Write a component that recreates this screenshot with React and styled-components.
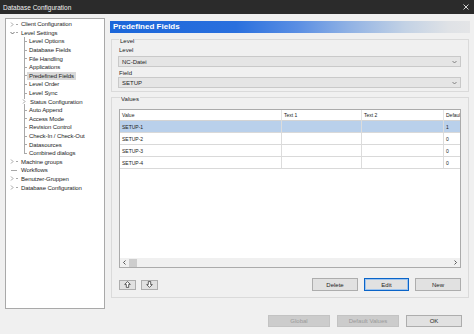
import React from 'react';
import styled, { createGlobalStyle, css } from 'styled-components';

const GlobalStyle = createGlobalStyle`
  html, body { margin: 0; padding: 0; }
  body {
    background: #f0f0f0;
    font-family: "Liberation Sans", Arial, sans-serif;
    color: #1a1a1a;
  }
  * { box-sizing: border-box; }
`;

const Window = styled.div`
  width: 474px;
  height: 334px;
  display: flex;
  flex-direction: column;
  background: #f0f0f0;
  overflow: hidden;
`;

const TitleBar = styled.div`
  height: 14px;
  flex: none;
  background: #2b2b2b;
  color: #f2f2f2;
  display: flex;
  align-items: center;
  justify-content: space-between;
  padding: 0 5px 0 3px;
  font-size: 6.5px;
`;

const Body = styled.div`
  flex: 1;
  min-width: 0;
  display: flex;
  flex-direction: column;
  padding: 4px 4px 0 5px;
`;

const Main = styled.div`
  display: flex;
  gap: 4px;
  height: 291px;
  min-width: 0;
`;

/* ---------- Tree ---------- */
const TreePanel = styled.div`
  width: 100px;
  height: 100%;
  flex: none;
  background: #fff;
  border: 1px solid #a9a9a9;
  padding-top: 1px;
  font-size: 6px;
  letter-spacing: -0.1px;
`;

const TreeRow = styled.div`
  height: 8.6px;
  display: flex;
  align-items: stretch;
  white-space: nowrap;
  padding-left: ${(p) => (p.$depth ? 18 : 4)}px;
`;

const RootSlot = styled.span`
  width: 9px;
  flex: none;
  display: flex;
  align-items: center;
  background: linear-gradient(#a8a8a8, #a8a8a8) no-repeat;
  background-size: ${(p) => (p.$leaf ? '6px 1px' : '2px 1px')};
  background-position: ${(p) => (p.$leaf ? '1px 50%' : '6px 50%')};
`;

const Connector = styled.span`
  width: ${(p) => (p.$expander ? 4 : 3)}px;
  flex: none;
  display: flex;
  align-items: center;
  background:
    linear-gradient(#a8a8a8, #a8a8a8) left top / 1px ${(p) => (p.$last ? '50%' : '100%')} no-repeat,
    linear-gradient(#a8a8a8, #a8a8a8) left center / ${(p) => (p.$expander ? '0px' : '100%')} 1px no-repeat;
`;

const ChevronBox = styled.span`
  display: flex;
  align-items: center;
  margin-left: ${(p) => p.$shift || 0}px;
  background: ${(p) => (p.$white ? '#fff' : 'transparent')};
`;

const TreeLabel = styled.span`
  display: flex;
  align-items: center;
  padding: 0 2px;
  color: #1e1e1e;
  ${(p) =>
    p.$selected &&
    css`
      background: #d9d9d9;
    `}
`;

const ChevronRight = ({ color = '#8c8c8c' }) => (
  <svg width="4" height="5" viewBox="0 0 4 5">
    <path d="M1 0.5 L3 2.5 L1 4.5" stroke={color} strokeWidth="0.8" fill="none" />
  </svg>
);

const ChevronDown = () => (
  <svg width="5" height="4" viewBox="0 0 5 4">
    <path d="M0.5 1 L2.5 3 L4.5 1" stroke="#505050" strokeWidth="0.8" fill="none" />
  </svg>
);

const treeData = [
  { label: 'Client Configuration', depth: 0, exp: 'closed' },
  { label: 'Level Settings', depth: 0, exp: 'open' },
  { label: 'Level Options', depth: 1 },
  { label: 'Database Fields', depth: 1 },
  { label: 'File Handling', depth: 1 },
  { label: 'Applications', depth: 1 },
  { label: 'Predefined Fields', depth: 1, selected: true },
  { label: 'Level Order', depth: 1 },
  { label: 'Level Sync', depth: 1 },
  { label: 'Status Configuration', depth: 1, exp: 'closed' },
  { label: 'Auto Append', depth: 1 },
  { label: 'Access Mode', depth: 1 },
  { label: 'Revision Control', depth: 1 },
  { label: 'Check-In / Check-Out', depth: 1 },
  { label: 'Datasources', depth: 1 },
  { label: 'Combined dialogs', depth: 1, last: true },
  { label: 'Machine groups', depth: 0, exp: 'closed' },
  { label: 'Workflows', depth: 0 },
  { label: 'Benutzer-Gruppen', depth: 0, exp: 'closed' },
  { label: 'Database Configuration', depth: 0, exp: 'closed' },
];

const TreeItem = ({ item }) => {
  if (item.depth === 0) {
    return (
      <TreeRow $depth={0}>
        <RootSlot $leaf={!item.exp}>
          {item.exp === 'closed' && <ChevronRight />}
          {item.exp === 'open' && <ChevronDown />}
        </RootSlot>
        <TreeLabel $selected={item.selected}>{item.label}</TreeLabel>
      </TreeRow>
    );
  }
  return (
    <TreeRow $depth={1}>
      <Connector $last={item.last} $expander={!!item.exp}>
        {item.exp && (
          <ChevronBox $shift={-2} $white>
            <ChevronRight />
          </ChevronBox>
        )}
      </Connector>
      <TreeLabel $selected={item.selected}>{item.label}</TreeLabel>
    </TreeRow>
  );
};

/* ---------- Right pane ---------- */
const RightPane = styled.div`
  flex: 1;
  min-width: 0;
  display: flex;
  flex-direction: column;
  padding-top: 3px;
`;

const Banner = styled.div`
  height: 12px;
  margin-left: 1px;
  padding-left: 3px;
  background: linear-gradient(
    to right,
    #1b66d9 0%,
    #2a70de 35%,
    #5a8ee3 52%,
    #8fb1e4 66%,
    #c3d2e5 82%,
    #dfe2e6 94%,
    #e4e5e7 100%
  );
  color: #fff;
  font-weight: bold;
  font-size: 8px;
  line-height: 12px;
`;

const Group = styled.fieldset`
  margin: ${(p) => p.$top}px 1px 0 2px;
  padding: 0 7px ${(p) => p.$bottom}px ${(p) => p.$left}px;
  border: 1px solid #dadada;
  min-width: 0;
`;

const Legend = styled.legend`
  font-size: 6px;
  line-height: 6px;
  padding: 3px 1px 0 1px;
  margin-left: 1px;
  color: #1e1e1e;
`;

const FieldLabel = styled.div`
  font-size: 6px;
  line-height: 7px;
  margin-top: 3px;
  padding-left: 1px;
  color: #1e1e1e;
`;

const Combo = styled.div`
  height: 11px;
  margin-top: ${(p) => p.$top}px;
  background: #e5e5e5;
  border: 1px solid #c9c9c9;
  display: flex;
  align-items: center;
  justify-content: space-between;
  padding: 0 3px 0 3px;
  font-size: 6px;
  color: #1e1e1e;
`;

const ComboArrow = () => (
  <svg width="5" height="4" viewBox="0 0 5 4">
    <path d="M0.5 1 L2.5 3 L4.5 1" stroke="#6a6a6a" strokeWidth="0.8" fill="none" />
  </svg>
);

/* ---------- Table ---------- */
const TableFrame = styled.div`
  height: 159px;
  margin-top: 7px;
  border: 1px solid #ababab;
  background: #fff;
  display: flex;
  flex-direction: column;
  overflow: hidden;
  min-width: 0;
`;

const Grid = styled.div`
  flex: 1;
  min-width: 0;
  display: grid;
  grid-template-columns: 162px 80px 82px 40px;
  grid-template-rows: 11px;
  grid-auto-rows: 12px;
  align-content: start;
  overflow: hidden;
  font-size: 5px;
`;

const Cell = styled.div`
  display: flex;
  align-items: center;
  padding-left: 2px;
  white-space: nowrap;
  overflow: hidden;
  color: #222;
  border-right: 1px solid ${(p) => (p.$head ? '#e4e4e4' : '#dcdcdc')};
  border-bottom: 1px solid ${(p) => (p.$head ? '#d3d3d3' : '#d9d9d9')};
  background: ${(p) => (p.$selected ? '#b9d0eb' : '#fff')};
`;

const ScrollBar = styled.div`
  height: 9px;
  flex: none;
  background: #f0f0f0;
  display: flex;
  align-items: center;
`;

const ScrollArrow = styled.span`
  width: 9px;
  height: 100%;
  display: flex;
  align-items: center;
  justify-content: center;
`;

const ScrollThumb = styled.span`
  width: 8px;
  height: 8px;
  background: #cdcdcd;
`;

const ScrollSpacer = styled.span`
  flex: 1;
`;

/* ---------- Buttons ---------- */
const ButtonRow = styled.div`
  display: flex;
  align-items: center;
  margin-top: 10px;
  gap: 5px;
`;

const Spacer = styled.div`
  flex: 1;
`;

const ActionGroup = styled.div`
  display: flex;
  gap: 6px;
`;

const IconButton = styled.button`
  width: 17px;
  height: 10px;
  padding: 0;
  border: 1px solid #adadad;
  background: #e1e1e1;
  display: flex;
  align-items: center;
  justify-content: center;
`;

const Button = styled.button`
  width: ${(p) => p.$w}px;
  height: ${(p) => p.$h}px;
  padding: 0;
  font-family: "Liberation Sans", Arial, sans-serif;
  font-size: 6px;
  color: #1e1e1e;
  background: #e1e1e1;
  border: 1px solid #adadad;
  ${(p) =>
    p.$focused &&
    css`
      border-color: #0a64c8;
      box-shadow: inset 0 0 0 1px #9cc3ee;
    `}
  ${(p) =>
    p.disabled &&
    css`
      background: #cccccc;
      border-color: #c3c3c3;
      color: #9a9a9a;
    `}
`;

const Footer = styled.div`
  display: flex;
  justify-content: flex-end;
  gap: 7px;
  margin-top: 6px;
  padding-right: 8px;
`;

const UpArrow = () => (
  <svg width="7" height="7" viewBox="0 0 7 7">
    <path d="M3.5 0.6 L6.3 3.4 H4.7 V6.4 H2.3 V3.4 H0.7 Z" stroke="#222" strokeWidth="0.7" fill="#fff" />
  </svg>
);

const DownArrow = () => (
  <svg width="7" height="7" viewBox="0 0 7 7">
    <path d="M3.5 6.4 L6.3 3.6 H4.7 V0.6 H2.3 V3.6 H0.7 Z" stroke="#222" strokeWidth="0.7" fill="#fff" />
  </svg>
);

const CloseIcon = () => (
  <svg width="6" height="6" viewBox="0 0 6 6">
    <path d="M0.5 0.5 L5.5 5.5 M5.5 0.5 L0.5 5.5" stroke="#e8e8e8" strokeWidth="0.9" />
  </svg>
);

const rows = [
  { value: 'SETUP-1', def: '1', selected: true },
  { value: 'SETUP-2', def: '0' },
  { value: 'SETUP-3', def: '0' },
  { value: 'SETUP-4', def: '0' },
];

export default function App() {
  return (
    <>
      <GlobalStyle />
      <Window>
        <TitleBar>
          <span>Database Configuration</span>
          <CloseIcon />
        </TitleBar>
        <Body>
          <Main>
            <TreePanel>
              {treeData.map((item) => (
                <TreeItem key={item.label} item={item} />
              ))}
            </TreePanel>
            <RightPane>
              <Banner>Predefined Fields</Banner>
              <Group $top={1.5} $bottom={3} $left={6}>
                <Legend>Level</Legend>
                <FieldLabel>Level</FieldLabel>
                <Combo $top={2.5}>
                  <span>NC-Datei</span>
                  <ComboArrow />
                </Combo>
                <FieldLabel>Field</FieldLabel>
                <Combo $top={0}>
                  <span>SETUP</span>
                  <ComboArrow />
                </Combo>
              </Group>
              <Group $top={1} $bottom={6} $left={7}>
                <Legend>Values</Legend>
                <TableFrame>
                  <Grid>
                    <Cell $head>Value</Cell>
                    <Cell $head>Text 1</Cell>
                    <Cell $head>Text 2</Cell>
                    <Cell $head>Default</Cell>
                    {rows.map((r) => (
                      <React.Fragment key={r.value}>
                        <Cell $selected={r.selected}>{r.value}</Cell>
                        <Cell $selected={r.selected} />
                        <Cell $selected={r.selected} />
                        <Cell $selected={r.selected}>{r.def}</Cell>
                      </React.Fragment>
                    ))}
                  </Grid>
                  <ScrollBar>
                    <ScrollArrow>
                      <svg width="3" height="5" viewBox="0 0 3 5">
                        <path d="M2.5 0.5 L0.5 2.5 L2.5 4.5" stroke="#333" strokeWidth="0.8" fill="none" />
                      </svg>
                    </ScrollArrow>
                    <ScrollThumb />
                    <ScrollSpacer />
                    <ScrollArrow>
                      <svg width="3" height="5" viewBox="0 0 3 5">
                        <path d="M0.5 0.5 L2.5 2.5 L0.5 4.5" stroke="#333" strokeWidth="0.8" fill="none" />
                      </svg>
                    </ScrollArrow>
                  </ScrollBar>
                </TableFrame>
                <ButtonRow>
                  <IconButton>
                    <UpArrow />
                  </IconButton>
                  <IconButton>
                    <DownArrow />
                  </IconButton>
                  <Spacer />
                  <ActionGroup>
                    <Button $w={46} $h={13}>Delete</Button>
                    <Button $w={45} $h={13} $focused>Edit</Button>
                    <Button $w={46} $h={13}>New</Button>
                  </ActionGroup>
                </ButtonRow>
              </Group>
            </RightPane>
          </Main>
          <Footer>
            <Button $w={62} $h={12} disabled>Global</Button>
            <Button $w={62} $h={12} disabled>Default Values</Button>
            <Button $w={56} $h={12}>OK</Button>
          </Footer>
        </Body>
      </Window>
    </>
  );
}
